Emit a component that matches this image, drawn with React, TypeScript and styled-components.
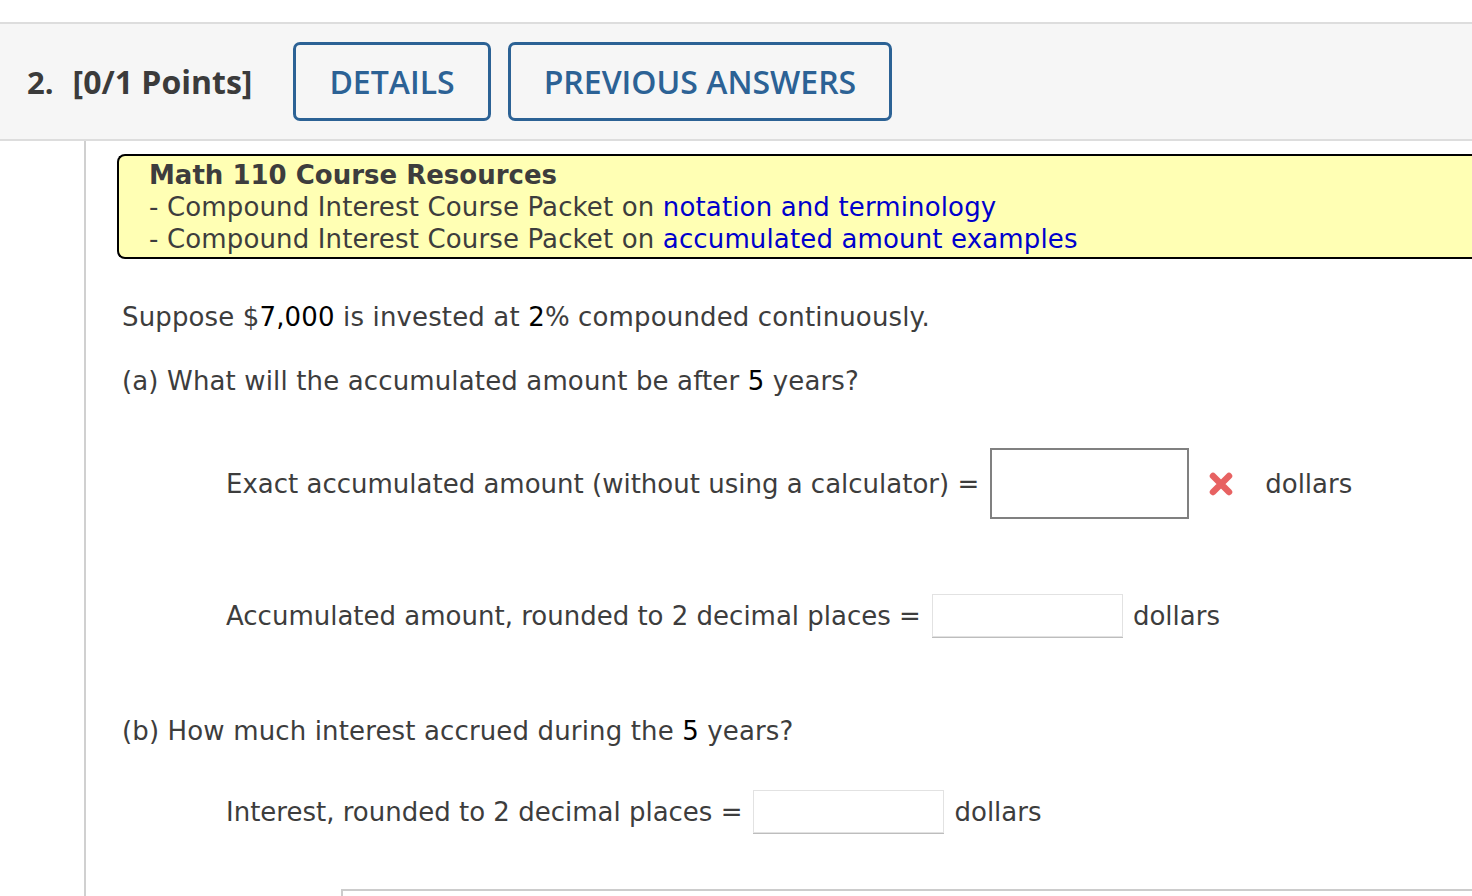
import React from 'react';
import styled, { createGlobalStyle } from 'styled-components';

const GlobalStyle = createGlobalStyle`
  body {
    margin: 0;
    background: #ffffff;
    overflow: hidden;
  }
`;

type AnswerRowProps = {
  label: string;
  inputWidth: number;
  wrong?: boolean;
};

function WrongMark() {
  return (
    <Mark width="28" height="28" viewBox="0 0 28 28">
      <path
        d="M6 6 L22 22 M22 6 L6 22"
        stroke="#e55555"
        strokeWidth="6.5"
        strokeLinecap="round"
        fill="none"
        opacity="0.92"
      />
    </Mark>
  );
}

function AnswerRow({ label, inputWidth, wrong }: AnswerRowProps) {
  return (
    <Row>
      <Label>{label} =</Label>
      {wrong ? (
        <>
          <BigInput style={{ width: inputWidth }} />
          <WrongMark />
          <Unit $gap={30}>dollars</Unit>
        </>
      ) : (
        <>
          <SmallInput style={{ width: inputWidth }} />
          <Unit $gap={10}>dollars</Unit>
        </>
      )}
    </Row>
  );
}

function App() {
  return (
    <Page>
      <GlobalStyle />
      <QuestionHeader>
        <Number>2.</Number>
        <Points>[0/1 Points]</Points>
        <ButtonGroup>
          <HeaderButton>DETAILS</HeaderButton>
          <HeaderButton>PREVIOUS ANSWERS</HeaderButton>
        </ButtonGroup>
      </QuestionHeader>
      <Body>
        <Gutter />
        <Content>
          <ResourceBox>
            <ResourceTitle>Math 110 Course Resources</ResourceTitle>
            <div>
              - Compound Interest Course Packet on <Link>notation and terminology</Link>
            </div>
            <div>
              - Compound Interest Course Packet on <Link>accumulated amount examples</Link>
            </div>
          </ResourceBox>
          <Para $top={42}>
            Suppose $<Num>7,000</Num> is invested at <Num>2</Num>% compounded continuously.
          </Para>
          <Para $top={32}>
            (a) What will the accumulated amount be after <Num>5</Num> years?
          </Para>
          <RowSlot $top={51}>
            <AnswerRow label="Exact accumulated amount (without using a calculator)" inputWidth={199} wrong />
          </RowSlot>
          <RowSlot $top={75}>
            <AnswerRow label="Accumulated amount, rounded to 2 decimal places" inputWidth={191} />
          </RowSlot>
          <Para $top={78}>
            (b) How much interest accrued during the <Num>5</Num> years?
          </Para>
          <RowSlot $top={43}>
            <AnswerRow label="Interest, rounded to 2 decimal places" inputWidth={191} />
          </RowSlot>
          <NextBox />
        </Content>
      </Body>
    </Page>
  );
}

export default App;

const Page = styled.div`
  width: 1472px;
  height: 896px;
  padding-top: 22px;
  box-sizing: border-box;
  overflow: hidden;
  font-family: 'DejaVu Sans', Verdana, sans-serif;
  color: #3d3d3d;
`;

const QuestionHeader = styled.header`
  height: 119px;
  box-sizing: border-box;
  border-top: 2px solid #dddddd;
  border-bottom: 2px solid #dddddd;
  background: #f6f6f6;
  display: flex;
  align-items: center;
  padding-left: 27px;
  font-family: 'Open Sans', sans-serif;
`;

const Number = styled.span`
  font-size: 31px;
  font-weight: 700;
  color: #3b3b3b;
  margin-right: 19px;
`;

const Points = styled.span`
  font-size: 32px;
  font-weight: 700;
  color: #3b3b3b;
`;

const ButtonGroup = styled.div`
  display: flex;
  gap: 17px;
  margin-left: 41px;
`;

const HeaderButton = styled.button`
  height: 79px;
  padding: 0 33px;
  border: 3px solid #2c6295;
  border-radius: 7px;
  background: transparent;
  color: #2c6295;
  font-family: 'Open Sans', sans-serif;
  font-size: 32px;
  font-weight: 600;
  cursor: pointer;
`;

const Body = styled.div`
  display: flex;
`;

const Gutter = styled.div`
  width: 84px;
  flex-shrink: 0;
  border-right: 2px solid #d0d0d0;
  height: 760px;
`;

const Content = styled.div`
  flex: 1;
  padding-left: 31px;
  padding-top: 13px;
  font-size: 26px;
  line-height: 32px;
`;

const ResourceBox = styled.div`
  border: 2px solid #000000;
  border-right: none;
  border-radius: 8px 0 0 8px;
  background: #ffffb4;
  padding: 3px 30px 2px;
  letter-spacing: 0.14px;
`;

const ResourceTitle = styled.div`
  font-weight: 700;
  letter-spacing: 0;
`;

const Link = styled.a`
  color: #0000cc;
  text-decoration: none;
`;

const Para = styled.p<{ $top: number }>`
  margin: ${(p) => p.$top}px 0 0;
  padding-left: 5px;
  letter-spacing: 0.14px;
`;

const Num = styled.span`
  color: #000000;
`;

const RowSlot = styled.div<{ $top: number }>`
  margin-top: ${(p) => p.$top}px;
  padding-left: 109px;
`;

const Row = styled.div`
  display: flex;
  align-items: center;
`;

const Label = styled.span`
  margin-right: 11px;
  white-space: nowrap;
`;

const BigInput = styled.input`
  height: 71px;
  box-sizing: border-box;
  border: 2px solid #808080;
  background: #ffffff;
  outline: none;
`;

const SmallInput = styled.input`
  height: 43px;
  box-sizing: border-box;
  border: 1px solid #e2e2e2;
  box-shadow: 0 1px 0 #bdbdbd;
  background: #ffffff;
  outline: none;
`;

const Mark = styled.svg`
  margin-left: 18px;
  flex-shrink: 0;
`;

const Unit = styled.span<{ $gap: number }>`
  margin-left: ${(p) => p.$gap}px;
`;

const NextBox = styled.div`
  margin-top: 56px;
  margin-left: 224px;
  height: 40px;
  border: 2px solid #cccccc;
  border-right: none;
`;
